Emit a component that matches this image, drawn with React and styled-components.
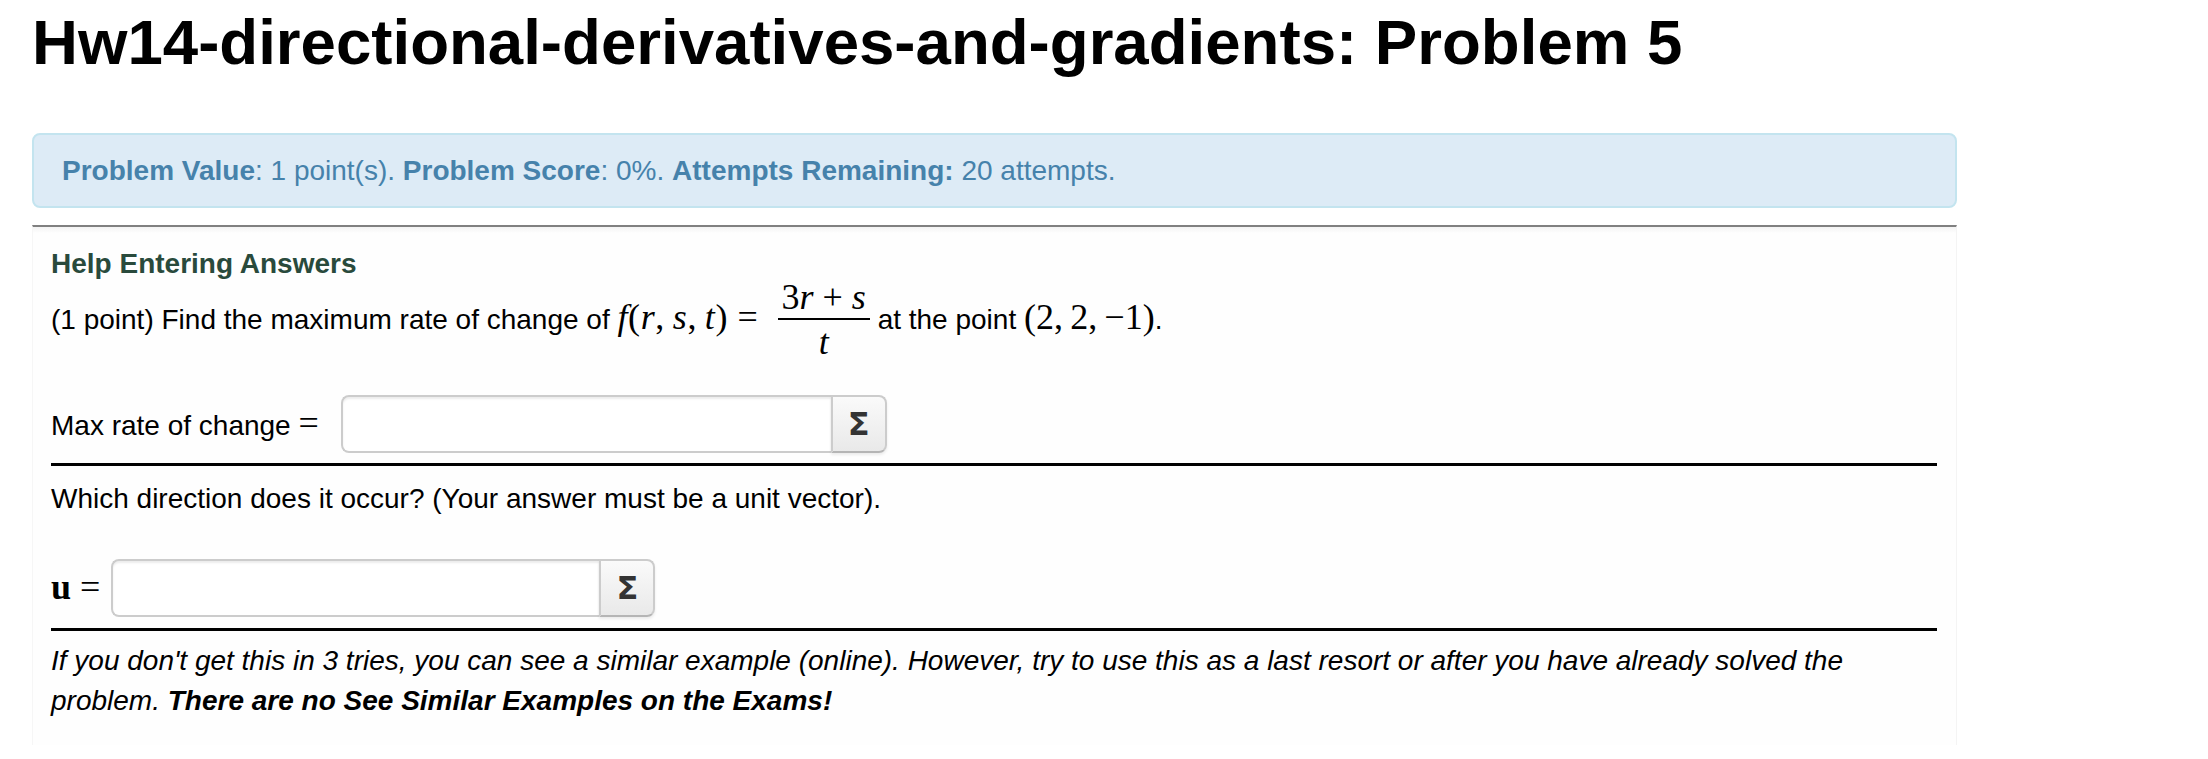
import React from "react";
import styled, { createGlobalStyle } from "styled-components";

const GlobalStyle = createGlobalStyle`
  html, body {
    margin: 0;
    padding: 0;
    background: #ffffff;
  }
  body {
    font-family: "Liberation Sans", Arial, Helvetica, sans-serif;
    color: #000;
  }
`;

const Page = styled.div`
  width: 1925px;
  padding: 0 0 0 32px;
  box-sizing: content-box;
`;

const Title = styled.h1`
  margin: 7px 0 56px;
  font-size: 63.6px;
  line-height: 70px;
  font-weight: 700;
  color: #000;
`;

const Alert = styled.div`
  box-sizing: border-box;
  height: 75px;
  border: 2px solid #c3e4ef;
  border-radius: 8px;
  background: #ddebf6;
  padding: 16px 28px;
  color: #4682ab;
  font-size: 28px;
  line-height: 40px;
`;

const Label = styled.span`
  font-weight: 700;
`;

const Panel = styled.div`
  margin-top: 17px;
  border-top: 2px solid #808080;
  border-left: 1px solid #f6f6f6;
  border-right: 1px solid #f4f4f4;
  background: linear-gradient(#f3f3f3 0px, #fefefe 6px, #fefefe 100%);
  padding: 21px 19px 24px 18px;
  font-size: 28px;
  line-height: 40px;
`;

const HelpLink = styled.div`
  font-weight: 700;
  line-height: 32px;
  color: #294a3c;
`;

const Para = styled.div`
  line-height: 40px;
  margin-top: ${(p) => p.$top || 0}px;
  font-style: ${(p) => (p.$italic ? "italic" : "normal")};
`;

const Math = styled.span`
  font-family: "Liberation Serif", "Times New Roman", serif;
  font-size: 36px;
  letter-spacing: ${(p) => p.$spacing || 0}px;
  white-space: nowrap;
`;

const V = styled.span`
  font-style: italic;
`;

const BoldV = styled.span`
  font-weight: 700;
`;

const Fraction = styled.span`
  display: inline-block;
  vertical-align: -25px;
  margin: 0 0 0 19px;
  font-family: "Liberation Serif", "Times New Roman", serif;
  font-size: 36px;
  text-align: center;
`;

const Num = styled.span`
  display: block;
  line-height: 35px;
  padding: 0 4px;
`;

const Bar = styled.span`
  display: block;
  height: 2px;
  margin-top: 3px;
  background: #000;
`;

const Den = styled.span`
  display: block;
  line-height: 35px;
  padding-top: 5px;
`;

const AnswerRow = styled.div`
  display: flex;
  align-items: center;
  margin-top: ${(p) => p.$top}px;
  height: 58px;
`;

const RowLabel = styled.span`
  margin-right: ${(p) => p.$gap}px;
  white-space: nowrap;
`;

const InputGroup = styled.div`
  display: flex;
  height: 58px;
`;

const AnswerInput = styled.input`
  box-sizing: border-box;
  width: ${(p) => p.$w}px;
  height: 58px;
  margin: 0;
  padding: 8px 12px;
  border: 2px solid #cccccc;
  border-right: none;
  border-radius: 8px 0 0 8px;
  background: #fff;
  box-shadow: inset 0 2px 2px rgba(0, 0, 0, 0.075);
  font-size: 28px;
  font-family: inherit;
  outline: none;
`;

const SigmaButton = styled.button`
  box-sizing: border-box;
  width: 56px;
  height: 58px;
  margin: 0;
  padding: 0;
  border: 2px solid #cccccc;
  border-bottom-color: #b5b5b5;
  border-radius: 0 8px 8px 0;
  background: linear-gradient(#fafafa, #e9e9e9);
  box-shadow: 0 2px 3px rgba(0, 0, 0, 0.08);
  color: #333;
  font-family: "DejaVu Sans", "Liberation Sans", sans-serif;
  font-weight: 700;
  font-size: 32px;
  line-height: 54px;
  cursor: pointer;
`;

const Rule = styled.div`
  margin-top: ${(p) => p.$top}px;
  border-top: 3px solid #000;
`;

export default function App() {
  return (
    <>
      <GlobalStyle />
      <Page>
        <Title>Hw14-directional-derivatives-and-gradients: Problem 5</Title>
        <Alert>
          <Label>Problem Value</Label>: 1 point(s). <Label>Problem Score</Label>: 0%.{" "}
          <Label>Attempts Remaining:</Label> 20 attempts.
        </Alert>
        <Panel>
          <HelpLink>Help Entering Answers</HelpLink>
          <Para>
            (1 point) Find the maximum rate of change of{" "}
            <Math $spacing={0.6}>
              <V>f</V>(<V>r</V>,&#8201;<V>s</V>,&#8201;<V>t</V>)&nbsp;=
            </Math>
            <Fraction>
              <Num>
                3<V>r</V>&nbsp;+&nbsp;<V>s</V>
              </Num>
              <Bar />
              <Den>
                <V>t</V>
              </Den>
            </Fraction>{" "}
            at the point{" "}
            <Math>(2,&#8201;2,&#8201;&minus;1)</Math>.
          </Para>
          <AnswerRow $top={35}>
            <RowLabel $gap={22}>
              Max rate of change <Math>=</Math>
            </RowLabel>
            <InputGroup>
              <AnswerInput $w={490} aria-label="Max rate of change" />
              <SigmaButton type="button">Σ</SigmaButton>
            </InputGroup>
          </AnswerRow>
          <Rule $top={10} />
          <Para $top={13}>
            Which direction does it occur? (Your answer must be a unit vector).
          </Para>
          <AnswerRow $top={40}>
            <RowLabel $gap={11}>
              <Math>
                <BoldV>u</BoldV>&nbsp;=
              </Math>
            </RowLabel>
            <InputGroup>
              <AnswerInput $w={488} aria-label="u" />
              <SigmaButton type="button">Σ</SigmaButton>
            </InputGroup>
          </AnswerRow>
          <Rule $top={11} />
          <Para $top={10} $italic>
            If you don't get this in 3 tries, you can see a similar example (online). However, try
            to use this as a last resort or after you have already solved the problem.{" "}
            <b>There are no See Similar Examples on the Exams!</b>
          </Para>
        </Panel>
      </Page>
    </>
  );
}
